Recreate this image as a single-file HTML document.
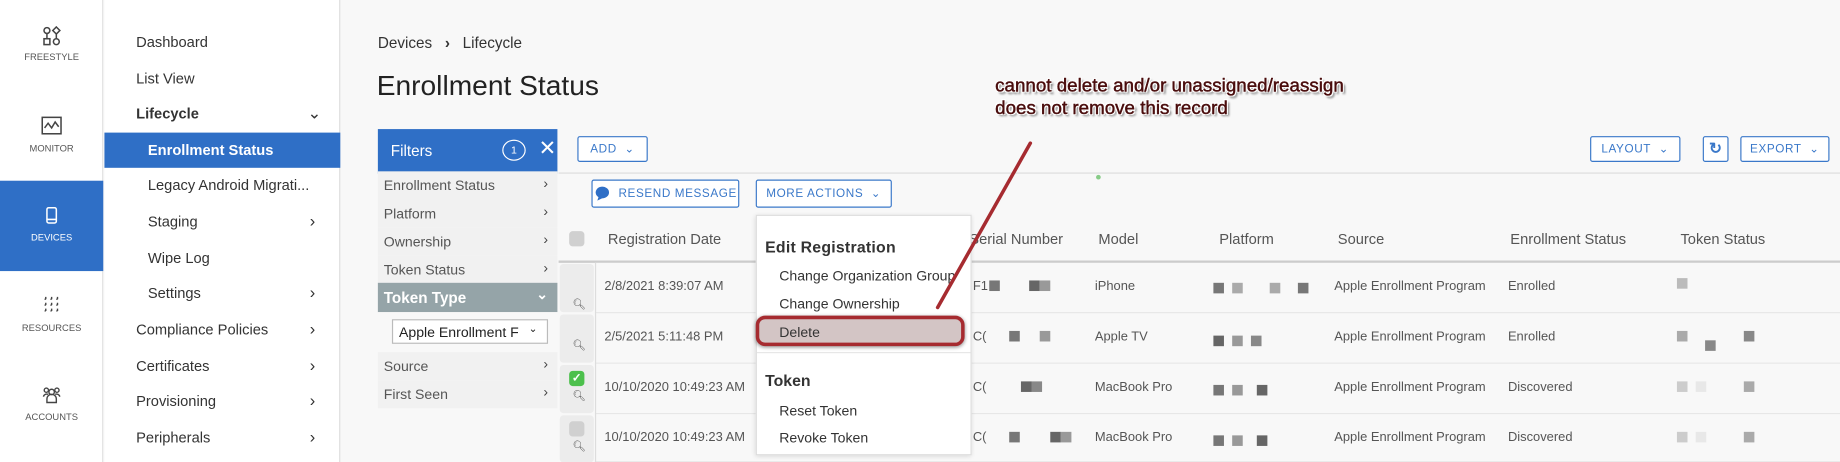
<!DOCTYPE html>
<html><head><meta charset="utf-8"><style>
*{box-sizing:border-box;margin:0;padding:0}
html,body{width:1840px;height:462px;overflow:hidden;background:#f8f8f8}
#w{position:absolute;left:0;top:0;width:1568px;height:394px;transform:scale(1.1735);transform-origin:0 0;font-family:"Liberation Sans",sans-serif;color:#444;background:#f8f8f8}
.a{position:absolute;white-space:nowrap}
.rail{left:0;top:0;width:88px;height:394px;background:#fff;border-right:1px solid #e2e2e2}
.rl{font-size:8px;color:#555;width:88px;text-align:center}
.nav{left:89px;top:0;width:201px;height:394px;background:#fff;border-right:1px solid #ddd}
.n{font-size:12.5px;color:#333}
.chev{font-size:14px;color:#333;left:264px}
.btn{border:1px solid #3a78c9;border-radius:2px;background:#fff;color:#3a78c9;font-size:10px;letter-spacing:.5px;display:flex;align-items:center;justify-content:center}
.fr{left:322px;width:153px;height:24px;background:#f1f1f1;font-size:12px;color:#555;padding:5px 5px}
.fr i{position:absolute;right:8px;top:3px;font-style:normal;font-size:12px;color:#444}
.th{font-size:12.5px;color:#555;top:197px}
.row{left:507px;width:1061px;border-bottom:1px solid #e6e6e6;background:#f8f8f8}
.lc{left:477px;width:29px;background:#ececec;border-radius:3px}
.c{font-size:11px;color:#555}
.px{position:absolute;width:9px;height:9px}
.mi{font-size:12px;color:#333;left:664px}
</style></head><body><div id="w">
<div class="a rail"></div>
<div class="a" style="left:0;top:154px;width:88px;height:77px;background:#2f6fc6"></div>
<svg class="a" style="left:36px;top:22px" width="17" height="17" viewBox="0 0 17 17" fill="none" stroke="#444" stroke-width="1.3"><circle cx="4" cy="4" r="2.5"/><path d="M12 1l3 3-3 3-3-3z"/><rect x="1.5" y="11" width="5" height="5"/><circle cx="12" cy="13.5" r="2.5"/><path d="M4 6.5v4.5M12 7v4"/></svg>
<div class="a rl" style="top:44px">FREESTYLE</div>
<svg class="a" style="left:35px;top:99px" width="18" height="16" viewBox="0 0 18 16" fill="none" stroke="#444" stroke-width="1.3"><rect x="1" y="1" width="16" height="14"/><path d="M3 10l3-4 3 4 3-5 3 4"/></svg>
<div class="a rl" style="top:122px">MONITOR</div>
<svg class="a" style="left:39px;top:176px" width="10" height="15" viewBox="0 0 10 15" fill="none" stroke="#fff" stroke-width="1.3"><rect x="1" y="1" width="8" height="13" rx="1.5"/><path d="M1 11h8"/></svg>
<div class="a rl" style="top:198px;color:#fff">DEVICES</div>
<svg class="a" style="left:37px;top:252px" width="14" height="14" viewBox="0 0 14 14" stroke="#444" stroke-width="1.2"><path d="M2 1v2M7 1v2M12 1v2M2 6v2M7 6v2M12 6v2M2 11v2M7 11v2M12 11v2M1 3h1M6 3h1M11 3h1M1 8h1M6 8h1M11 8h1M1 13h1M6 13h1M11 13h1"/></svg>
<div class="a rl" style="top:275px">RESOURCES</div>
<svg class="a" style="left:36px;top:329px" width="16" height="15" viewBox="0 0 16 15" fill="none" stroke="#444" stroke-width="1.2"><circle cx="8" cy="5" r="2.3"/><circle cx="3.5" cy="3.5" r="1.8"/><circle cx="12.5" cy="3.5" r="1.8"/><path d="M4 14v-3a4 4 0 018 0v3zM1 9a3 3 0 014-2M15 9a3 3 0 00-4-2"/></svg>
<div class="a rl" style="top:351px">ACCOUNTS</div>

<div class="a nav"></div>
<div class="a n" style="left:116px;top:29px">Dashboard</div>
<div class="a n" style="left:116px;top:60px">List View</div>
<div class="a n" style="left:116px;top:90px;font-weight:bold;color:#333">Lifecycle</div>
<div class="a chev" style="top:88px;left:262px">⌄</div>
<div class="a" style="left:89px;top:113px;width:201px;height:30px;background:#2f6fc6"></div>
<div class="a n" style="left:126px;top:121px;color:#fff;font-weight:bold">Enrollment Status</div>
<div class="a n" style="left:126px;top:151px">Legacy Android Migrati...</div>
<div class="a n" style="left:126px;top:182px">Staging</div><div class="a chev" style="top:180px">›</div>
<div class="a n" style="left:126px;top:213px">Wipe Log</div>
<div class="a n" style="left:126px;top:243px">Settings</div><div class="a chev" style="top:241px">›</div>
<div class="a n" style="left:116px;top:274px">Compliance Policies</div><div class="a chev" style="top:272px">›</div>
<div class="a n" style="left:116px;top:305px">Certificates</div><div class="a chev" style="top:303px">›</div>
<div class="a n" style="left:116px;top:335px">Provisioning</div><div class="a chev" style="top:333px">›</div>
<div class="a n" style="left:116px;top:366px">Peripherals</div><div class="a chev" style="top:364px">›</div>

<div class="a" style="left:322px;top:29px;font-size:13px;color:#333">Devices&nbsp;&nbsp;&nbsp;<b>›</b>&nbsp;&nbsp;&nbsp;Lifecycle</div>
<div class="a" style="left:321px;top:60px;font-size:24px;color:#222">Enrollment Status</div>

<div class="a" style="left:322px;top:110px;width:153px;height:38px;background:#2f6fc6"></div>
<div class="a" style="left:333px;top:121px;color:#fff;font-size:13px">Filters</div>
<div class="a" style="left:428px;top:119px;width:20px;height:18px;border:1px solid #fff;border-radius:50%;color:#fff;font-size:9px;text-align:center;line-height:16px">1</div>
<div class="a" style="left:459px;top:116px;color:#fff;font-size:18px">✕</div>
<div class="a fr" style="top:146px">Enrollment Status<i>›</i></div>
<div class="a fr" style="top:170px">Platform<i>›</i></div>
<div class="a fr" style="top:194px">Ownership<i>›</i></div>
<div class="a fr" style="top:218px">Token Status<i>›</i></div>
<div class="a fr" style="top:241px;background:#95a4a8;color:#fff;font-weight:bold;font-size:13px;height:25px">Token Type<i style="color:#fff">⌄</i></div>
<div class="a" style="left:322px;top:266px;width:153px;height:34px;background:#f8f8f8"></div>
<div class="a" style="left:334px;top:272px;width:133px;height:21px;border:1px solid #bbb;background:#fff;font-size:12px;color:#222;padding:3px 5px;overflow:hidden">Apple Enrollment F<span style="position:absolute;right:8px;top:2px;font-size:9px">⌄</span></div>
<div class="a fr" style="top:300px">Source<i>›</i></div>
<div class="a fr" style="top:324px">First Seen<i>›</i></div>

<div class="a" style="left:476px;top:110px;width:1092px;height:284px;background:#f8f8f8"></div>
<div class="a btn" style="left:492px;top:116px;width:60px;height:22px">ADD&nbsp;&nbsp;⌄</div>
<div class="a btn" style="left:1355px;top:116px;width:77px;height:22px">LAYOUT&nbsp;&nbsp;⌄</div>
<div class="a btn" style="left:1451px;top:116px;width:22px;height:22px;font-size:13px;font-weight:bold">↻</div>
<div class="a btn" style="left:1483px;top:116px;width:76px;height:22px">EXPORT&nbsp;&nbsp;⌄</div>
<div class="a" style="left:476px;top:147px;width:1092px;height:1px;background:#ddd"></div>
<div class="a btn" style="left:504px;top:153px;width:126px;height:24px"><svg width="14" height="14" viewBox="0 0 14 14" style="margin-right:7px"><path d="M7 1a6 5 0 110 10l-4 2 1-3A6 5 0 017 1z" fill="#2f6fc6"/></svg>RESEND MESSAGE</div>
<div class="a btn" style="left:644px;top:153px;width:116px;height:24px">MORE ACTIONS&nbsp;&nbsp;⌄</div>

<div class="a" style="left:485px;top:197px;width:13px;height:13px;border-radius:3px;background:#d0d0d0"></div>
<div class="a th" style="left:518px">Registration Date</div>
<div class="a th" style="left:826px">Serial Number</div>
<div class="a th" style="left:936px">Model</div>
<div class="a th" style="left:1039px">Platform</div>
<div class="a th" style="left:1140px">Source</div>
<div class="a th" style="left:1287px">Enrollment Status</div>
<div class="a th" style="left:1432px">Token Status</div>
<div class="a" style="left:476px;top:222px;width:1092px;height:2px;background:#ccc"></div>

<div class="a row" style="top:224px;height:43px"></div><div class="a lc" style="top:225px;height:41px"></div>
<div class="a row" style="top:267px;height:43px"></div><div class="a lc" style="top:268px;height:41px"></div>
<div class="a row" style="top:310px;height:43px"></div><div class="a lc" style="top:311px;height:41px"></div>
<div class="a row" style="top:353px;height:41px"></div><div class="a lc" style="top:354px;height:40px"></div>
<div class="a" style="left:507px;top:224px;width:1px;height:170px;background:#ddd"></div>
<div class="a c" style="left:488px;top:254px;font-size:9px">🔍︎</div>
<div class="a c" style="left:488px;top:289px;font-size:9px">🔍︎</div>
<div class="a" style="left:485px;top:316px;width:13px;height:13px;border-radius:3px;background:#4cc04c;color:#fff;font-size:10px;text-align:center;line-height:13px;font-weight:bold">✓</div>
<div class="a c" style="left:488px;top:332px;font-size:9px">🔍︎</div>
<div class="a" style="left:485px;top:359px;width:13px;height:13px;border-radius:3px;background:#d0d0d0"></div>
<div class="a c" style="left:488px;top:375px;font-size:9px">🔍︎</div>

<div class="a c" style="left:515px;top:238px">2/8/2021 8:39:07 AM</div>
<div class="a c" style="left:515px;top:281px">2/5/2021 5:11:48 PM</div>
<div class="a c" style="left:515px;top:324px">10/10/2020 10:49:23 AM</div>
<div class="a c" style="left:515px;top:367px">10/10/2020 10:49:23 AM</div>
<div class="a c" style="left:829px;top:238px">F1</div>
<div class="a c" style="left:829px;top:281px">C(</div>
<div class="a c" style="left:829px;top:324px">C(</div>
<div class="a c" style="left:829px;top:367px">C(</div>
<div class="a c" style="left:933px;top:238px">iPhone</div>
<div class="a c" style="left:933px;top:281px">Apple TV</div>
<div class="a c" style="left:933px;top:324px">MacBook Pro</div>
<div class="a c" style="left:933px;top:367px">MacBook Pro</div>
<div class="a c" style="left:1137px;top:238px">Apple Enrollment Program</div>
<div class="a c" style="left:1137px;top:281px">Apple Enrollment Program</div>
<div class="a c" style="left:1137px;top:324px">Apple Enrollment Program</div>
<div class="a c" style="left:1137px;top:367px">Apple Enrollment Program</div>
<div class="a c" style="left:1285px;top:238px">Enrolled</div>
<div class="a c" style="left:1285px;top:281px">Enrolled</div>
<div class="a c" style="left:1285px;top:324px">Discovered</div>
<div class="a c" style="left:1285px;top:367px">Discovered</div>
<!-- pixel blocks -->
<div class="px" style="left:843px;top:239px;background:#777"></div><div class="px" style="left:877px;top:239px;background:#666"></div><div class="px" style="left:886px;top:239px;background:#999"></div>
<div class="px" style="left:860px;top:282px;background:#777"></div><div class="px" style="left:886px;top:282px;background:#999"></div>
<div class="px" style="left:870px;top:325px;background:#666"></div><div class="px" style="left:879px;top:325px;background:#888"></div>
<div class="px" style="left:860px;top:368px;background:#777"></div><div class="px" style="left:895px;top:368px;background:#666"></div><div class="px" style="left:904px;top:368px;background:#999"></div>
<div class="px" style="left:1034px;top:241px;background:#777"></div><div class="px" style="left:1050px;top:241px;background:#aaa"></div><div class="px" style="left:1082px;top:241px;background:#aaa"></div><div class="px" style="left:1106px;top:241px;background:#777"></div>
<div class="px" style="left:1034px;top:286px;background:#666"></div><div class="px" style="left:1050px;top:286px;background:#999"></div><div class="px" style="left:1066px;top:286px;background:#888"></div>
<div class="px" style="left:1034px;top:328px;background:#777"></div><div class="px" style="left:1050px;top:328px;background:#999"></div><div class="px" style="left:1071px;top:328px;background:#666"></div>
<div class="px" style="left:1034px;top:371px;background:#777"></div><div class="px" style="left:1050px;top:371px;background:#999"></div><div class="px" style="left:1071px;top:371px;background:#666"></div>
<div class="px" style="left:1429px;top:237px;background:#bbb"></div>
<div class="px" style="left:1429px;top:282px;background:#aaa"></div><div class="px" style="left:1453px;top:290px;background:#888"></div><div class="px" style="left:1486px;top:282px;background:#888"></div>
<div class="px" style="left:1429px;top:325px;background:#ccc"></div><div class="px" style="left:1445px;top:325px;background:#e8e8e8"></div><div class="px" style="left:1486px;top:325px;background:#aaa"></div>
<div class="px" style="left:1429px;top:368px;background:#ccc"></div><div class="px" style="left:1445px;top:368px;background:#e8e8e8"></div><div class="px" style="left:1486px;top:368px;background:#aaa"></div>

<div class="a" style="left:644px;top:183px;width:184px;height:205px;background:#fff;border:1px solid #ddd;box-shadow:0 1px 4px rgba(0,0,0,.15)"></div>
<div class="a" style="left:652px;top:203px;font-size:13.5px;color:#333;font-weight:bold;letter-spacing:.2px">Edit Registration</div>
<div class="a mi" style="top:228px">Change Organization Group</div>
<div class="a mi" style="top:252px">Change Ownership</div>
<div class="a" style="left:644px;top:269px;width:178px;height:26px;background:#d3c5c5;border:3px solid #a62b30;border-radius:8px;box-shadow:0 1px 3px rgba(0,0,0,.4)"></div>
<div class="a mi" style="top:276px">Delete</div>
<div class="a" style="left:645px;top:300px;width:182px;height:1px;background:#e6e6e6"></div>
<div class="a" style="left:652px;top:317px;font-size:13.5px;color:#333;font-weight:bold">Token</div>
<div class="a mi" style="top:343px">Reset Token</div>
<div class="a mi" style="top:366px">Revoke Token</div>

<svg class="a" style="left:0;top:0" width="1568" height="394"><line x1="878" y1="122" x2="799" y2="262" stroke="#a62b30" stroke-width="3" stroke-linecap="round"/></svg>
<div class="a" style="left:934px;top:149px;width:4px;height:4px;background:#8c8;border-radius:50%"></div>
<div class="a" style="left:848px;top:64px;font-size:16px;line-height:19px;color:#4a0d0d;-webkit-text-stroke:0.4px #4a0d0d;text-shadow:-1px -1px 0 #fff,1px -1px 0 #fff,-1px 1px 0 #fff,1px 1px 0 #fff,2px 2px 2px rgba(0,0,0,.6)">cannot delete and/or unassigned/reassign<br>does not remove this record</div>
</div></body></html>
